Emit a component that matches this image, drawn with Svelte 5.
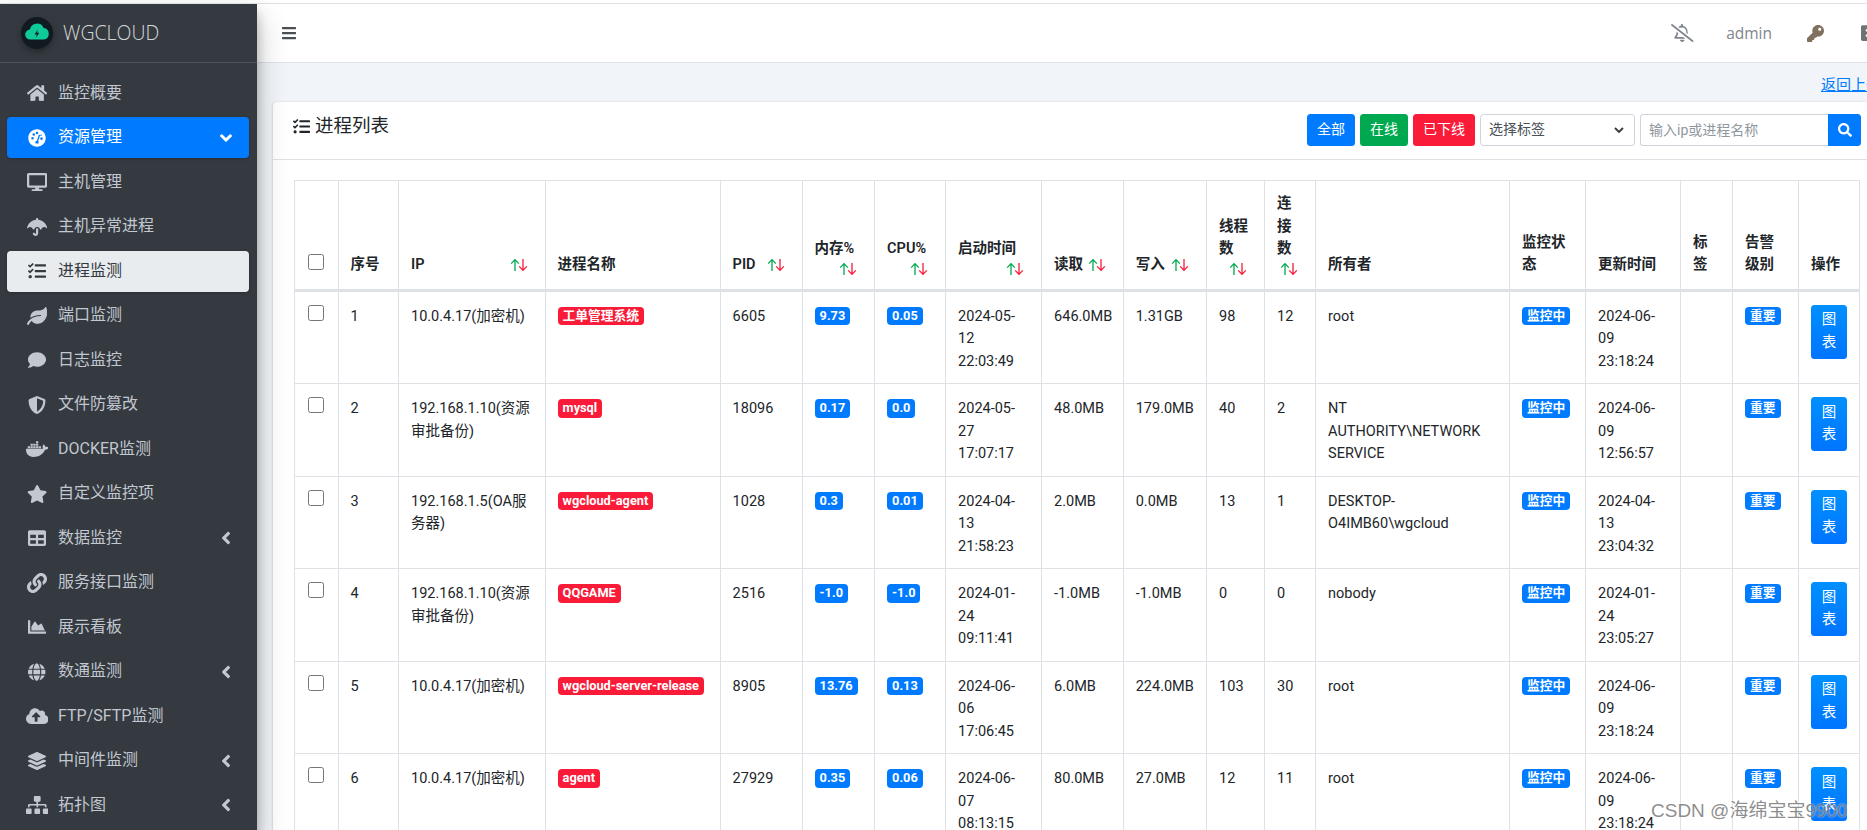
<script>
  const icons = {
    home: [576, 'M280.37 148.26L96 300.11V464a16 16 0 0 0 16 16l112.06-.29a16 16 0 0 0 15.92-16V368a16 16 0 0 1 16-16h64a16 16 0 0 1 16 16v95.64a16 16 0 0 0 16 16.05L464 480a16 16 0 0 0 16-16V300L295.67 148.26a12.19 12.19 0 0 0-15.3 0zM571.6 251.47L488 182.56V44.05a12 12 0 0 0-12-12h-56a12 12 0 0 0-12 12v72.61L318.47 43a48 48 0 0 0-61 0L4.34 251.47a12 12 0 0 0-1.6 16.9l25.5 31A12 12 0 0 0 45.15 301l235.22-193.74a12.19 12.19 0 0 1 15.3 0L530.9 301a12 12 0 0 0 16.9-1.6l25.5-31a12 12 0 0 0-1.7-16.93z'],
    star: [576, 'M259.3 17.8L194 150.2 47.9 171.5c-26.2 3.8-36.7 36.1-17.7 54.6l105.7 103-25 145.5c-4.5 26.3 23.2 46 46.4 33.7L288 439.6l130.7 68.7c23.2 12.2 50.9-7.4 46.4-33.7l-25-145.5 105.7-103c19-18.5 8.5-50.8-17.7-54.6L382 150.2 316.7 17.8c-11.7-23.6-45.6-23.9-57.4 0z'],
    comment: [512, 'M256 32C114.6 32 0 125.1 0 240c0 49.6 21.4 95 57 130.7C44.5 421.1 2.7 466 2.2 466.5c-2.2 2.3-2.8 5.7-1.5 8.7S4.8 480 8 480c66.3 0 116-31.8 140.6-51.4 32.7 12.3 69 19.4 107.4 19.4 141.4 0 256-93.1 256-208S397.4 32 256 32z'],
    tasks: [512, 'M139.61 35.5a12 12 0 0 0-17 0L58.93 98.81l-22.7-22.12a12 12 0 0 0-17 0L3.53 92.41a12 12 0 0 0 0 17l47.59 47.4a12.78 12.78 0 0 0 17.61 0l15.59-15.62L156.52 69a12.09 12.09 0 0 0 .09-17zm0 159.19a12 12 0 0 0-17 0l-63.68 63.72-22.7-22.1a12 12 0 0 0-17 0L3.53 252a12 12 0 0 0 0 17L51 316.5a12.77 12.77 0 0 0 17.6 0l15.7-15.69 72.2-72.22a12 12 0 0 0 .09-16.9zM64 368c-26.49 0-48.59 21.5-48.59 48S37.53 464 64 464a48 48 0 0 0 0-96zm432 16H208a16 16 0 0 0-16 16v32a16 16 0 0 0 16 16h288a16 16 0 0 0 16-16v-32a16 16 0 0 0-16-16zm0-320H208a16 16 0 0 0-16 16v32a16 16 0 0 0 16 16h288a16 16 0 0 0 16-16V80a16 16 0 0 0-16-16zm0 160H208a16 16 0 0 0-16 16v32a16 16 0 0 0 16 16h288a16 16 0 0 0 16-16v-32a16 16 0 0 0-16-16z'],
    bars: [448, 'M16 132h416c8.837 0 16-7.163 16-16V76c0-8.837-7.163-16-16-16H16C7.163 60 0 67.163 0 76v40c0 8.837 7.163 16 16 16zm0 160h416c8.837 0 16-7.163 16-16v-40c0-8.837-7.163-16-16-16H16c-8.837 0-16 7.163-16 16v40c0 8.837 7.163 16 16 16zm0 160h416c8.837 0 16-7.163 16-16v-40c0-8.837-7.163-16-16-16H16c-8.837 0-16 7.163-16 16v40c0 8.837 7.163 16 16 16z'],
    search: [512, 'M505 442.7L405.3 343c-4.5-4.5-10.6-7-17-7H372c27.6-35.3 44-79.7 44-128C416 93.1 322.9 0 208 0S0 93.1 0 208s93.1 208 208 208c48.3 0 92.7-16.4 128-44v16.3c0 6.4 2.5 12.5 7 17l99.7 99.7c9.4 9.4 24.6 9.4 33.9 0l28.3-28.3c9.4-9.4 9.4-24.6.1-34zM208 336c-70.7 0-128-57.2-128-128 0-70.7 57.2-128 128-128 70.7 0 128 57.2 128 128 0 70.7-57.2 128-128 128z'],
    key: [512, 'M512 176.001C512 273.203 433.202 352 336 352c-11.22 0-22.19-1.062-32.827-3.069l-24.012 27.014A23.999 23.999 0 0 1 261.223 384H224v40c0 13.255-10.745 24-24 24h-40v40c0 13.255-10.745 24-24 24H24c-13.255 0-24-10.745-24-24v-78.059c0-6.365 2.529-12.47 7.029-16.971l161.802-161.802C163.108 213.814 160 195.271 160 176 160 78.798 238.797.001 335.999 0 433.488-.001 512 78.511 512 176.001zM336 128c0 26.51 21.49 48 48 48s48-21.49 48-48-21.49-48-48-48-48 21.49-48 48z'],
    left: [256, 'M31.7 239l136-136c9.4-9.4 24.6-9.4 33.9 0l22.6 22.6c9.4 9.4 9.4 24.6 0 33.9L127.9 256l96.4 96.4c9.4 9.4 9.4 24.6 0 33.9L201.7 409c-9.4 9.4-24.6 9.4-33.9 0l-136-136c-9.5-9.4-9.5-24.6-.1-34z'],
    down: [320, 'M143 352.3L7 216.3c-9.4-9.4-9.4-24.6 0-33.9l22.6-22.6c9.4-9.4 24.6-9.4 33.9 0l96.4 96.4 96.4-96.4c9.4-9.4 24.6-9.4 33.9 0l22.6 22.6c9.4 9.4 9.4 24.6 0 33.9l-136 136c-9.2 9.4-24.4 9.4-33.8 0z'],
    desktop: [576, 'M528 0H48C21.5 0 0 21.5 0 48v320c0 26.5 21.5 48 48 48h192l-16 48h-72c-13.3 0-24 10.7-24 24s10.7 24 24 24h272c13.3 0 24-10.7 24-24s-10.7-24-24-24h-72l-16-48h192c26.5 0 48-21.5 48-48V48c0-26.5-21.5-48-48-48zm-16 352H64V64h448v288z'],
    umbrella: [576, 'M575.7 280.8C547.1 144.5 437.3 62.6 320 49.9V32c0-17.7-14.3-32-32-32s-32 14.3-32 32v17.9C138.3 62.6 29.5 144.5.3 280.8c-2.2 10.1 8.5 21.3 18.7 11.4 52-55 107.7-52.4 158.6 37 5.3 9.5 14.9 8.6 19.7 0 20.2-35.4 44.9-73.2 90.7-73.2 58.5 0 83.3 56.3 90.7 73.2 4.8 8.6 14.4 9.5 19.7 0 51-89.5 107.1-91.7 158.6-37 10.3 9.9 20.9-1.3 18.7-11.4zM256 301.7V432c0 8.8-7.2 16-16 16-7.8 0-13.2-5.3-15.1-10.7-5.9-16.7-24.1-25.4-40.8-19.5-16.7 5.9-25.4 24.2-19.5 40.8 11.2 31.9 41.6 53.3 75.4 53.3 44.1 0 80-35.9 80-80V301.6c-9.1-7.9-19.8-13.6-32-13.6-12.3 0-23 5.8-32 13.7z'],
    leaf: [576, 'M546.2 9.7c-5.6-12.5-21.6-13-28.3-1.2C486.9 62.4 431.4 96 368 96h-80C182 96 96 182 96 288c0 7 .8 13.7 1.5 20.5C161.3 262.8 253.4 224 384 224c8.8 0 16 7.2 16 16s-7.2 16-16 16C132.6 256 26 410.1 2.4 468c-6.6 16.3 1.2 34.9 17.5 41.6 16.4 6.8 35-1.1 41.8-17.3 1.5-3.6 20.9-47.9 71.9-90.6 32.4 43.9 94 85.8 174.9 77.2C465.5 467.5 576 326.7 576 154.3c0-50.2-10.8-102.2-29.8-144.6z'],
    shield: [512, 'M466.5 83.7l-192-80a48.15 48.15 0 0 0-36.9 0l-192 80C27.7 91.1 16 108.6 16 128c0 198.5 114.5 335.7 221.5 380.3 11.8 4.9 25.1 4.9 36.9 0C360.1 472.6 496 349.3 496 128c0-19.4-11.7-36.9-29.5-44.3zM256.1 446.3l-.1-381 175.9 73.3c-3.3 151.4-82.1 261.1-175.8 307.7z'],
    link: [512, 'M326.612 185.391c59.747 59.809 58.927 155.698.36 214.59-.11.12-.24.25-.36.37l-67.2 67.2c-59.27 59.27-155.699 59.262-214.96 0-59.27-59.26-59.27-155.7 0-214.96l37.106-37.106c9.84-9.84 26.786-3.3 27.294 10.606.648 17.722 3.826 35.527 9.69 52.721 1.986 5.822.567 12.262-3.783 16.612l-13.087 13.087c-28.026 28.026-28.905 73.66-1.155 101.96 28.024 28.579 74.086 28.749 102.325.51l67.2-67.19c28.191-28.191 28.073-73.757 0-101.83-3.701-3.694-7.429-6.564-10.341-8.569a16.037 16.037 0 0 1-6.947-12.606c-.396-10.567 3.348-21.456 11.698-29.806l21.054-21.055c5.521-5.521 14.182-6.199 20.584-1.731a152.482 152.482 0 0 1 20.522 17.197zM467.547 44.449c-59.261-59.262-155.69-59.27-214.96 0l-67.2 67.2c-.12.12-.25.25-.36.37-58.566 58.892-59.387 154.781.36 214.59a152.454 152.454 0 0 0 20.521 17.196c6.402 4.468 15.064 3.789 20.584-1.731l21.054-21.055c8.35-8.35 12.094-19.239 11.698-29.806a16.037 16.037 0 0 0-6.947-12.606c-2.912-2.005-6.64-4.875-10.341-8.569-28.073-28.073-28.191-73.639 0-101.83l67.2-67.19c28.239-28.239 74.3-28.069 102.325.51 27.75 28.3 26.872 73.934-1.155 101.96l-13.087 13.087c-4.35 4.35-5.769 10.79-3.783 16.612 5.864 17.194 9.042 34.999 9.69 52.721.509 13.906 17.454 20.446 27.294 10.606l37.106-37.106c59.271-59.259 59.271-155.699.001-214.959z'],
    chart: [512, 'M500 384c6.6 0 12 5.4 12 12v40c0 6.6-5.4 12-12 12H12c-6.6 0-12-5.4-12-12V76c0-6.6 5.4-12 12-12h40c6.6 0 12 5.4 12 12v308h436zM372.7 159.5L288 216l-85.3-113.7c-5.1-6.8-15.5-6.3-19.9 1L96 248v104h384l-89.9-187.8c-3.2-6.5-11.4-8.7-17.4-4.7z'],
    globe: [496, 'M336.5 160C322 70.7 287.8 8 248 8s-74 62.7-88.5 152h177zM152 256c0 22.2 1.2 43.5 3.3 64h185.3c2.1-20.5 3.3-41.8 3.3-64s-1.2-43.5-3.3-64H155.3c-2.1 20.5-3.3 41.8-3.3 64zm324.7-96c-28.6-67.9-86.5-120.4-158-141.6 24.4 33.8 41.2 84.7 50 141.6h108zM177.2 18.4C105.8 39.6 47.8 92.1 19.3 160h108c8.7-56.9 25.5-107.8 49.9-141.6zM487.4 192H372.7c2.1 21 3.3 42.5 3.3 64s-1.2 43-3.3 64h114.6c5.5-20.5 8.6-41.8 8.6-64s-3.1-43.5-8.5-64zM120 256c0-21.5 1.2-43 3.3-64H8.6C3.2 212.5 0 233.8 0 256s3.2 43.5 8.6 64h114.6c-2-21-3.2-42.5-3.2-64zm39.5 96c14.5 89.3 48.7 152 88.5 152s74-62.7 88.5-152h-177zm159.3 141.6c71.4-21.2 129.4-73.7 158-141.6h-108c-8.8 56.9-25.6 107.8-50 141.6zM19.3 352c28.6 67.9 86.5 120.4 158 141.6-24.4-33.8-41.2-84.7-50-141.6h-108z'],
    upload: [640, 'M537.6 226.6c4.1-10.7 6.4-22.4 6.4-34.6 0-53-43-96-96-96-19.7 0-38.1 6-53.3 16.2C367 64.2 315.3 32 256 32c-88.4 0-160 71.6-160 160 0 2.7.1 5.4.2 8.1C40.2 219.8 0 273.2 0 336c0 79.5 64.5 144 144 144h368c70.7 0 128-57.3 128-128 0-61.9-44-113.6-102.4-125.4zM393.4 288H328v112c0 8.8-7.2 16-16 16h-48c-8.8 0-16-7.2-16-16V288h-65.4c-14.3 0-21.4-17.2-11.3-27.3l105.4-105.4c6.2-6.2 16.4-6.2 22.6 0l105.4 105.4c10.1 10.1 2.9 27.3-11.3 27.3z'],
    layers: [512, 'M12.41 148.02l232.94 105.67c6.8 3.09 14.49 3.09 21.29 0l232.94-105.67c16.55-7.51 16.55-32.52 0-40.03L266.65 2.31a25.607 25.607 0 0 0-21.29 0L12.41 107.98c-16.55 7.51-16.55 32.53 0 40.04zm487.18 88.28l-58.09-26.33-161.64 73.27c-7.56 3.43-15.59 5.17-23.86 5.17s-16.29-1.74-23.86-5.17L70.51 209.97l-58.1 26.33c-16.55 7.5-16.55 32.5 0 40l232.94 105.59c6.8 3.08 14.49 3.08 21.29 0L499.59 276.3c16.55-7.5 16.55-32.5 0-40zm0 127.8l-57.87-26.23-161.86 73.37c-7.56 3.43-15.59 5.17-23.86 5.17s-16.29-1.74-23.86-5.17L70.29 337.87 12.41 364.1c-16.55 7.5-16.55 32.5 0 40l232.94 105.59c6.8 3.08 14.49 3.08 21.29 0L499.59 404.1c16.55-7.5 16.55-32.5 0-40z'],
    sitemap: [640, 'M128 352H32c-17.67 0-32 14.33-32 32v96c0 17.67 14.33 32 32 32h96c17.67 0 32-14.33 32-32v-96c0-17.67-14.33-32-32-32zm-24-80h192v48h48v-48h192v48h48v-57.59c0-21.17-17.23-38.41-38.41-38.41H344v-64h40c17.67 0 32-14.33 32-32V32c0-17.67-14.33-32-32-32H256c-17.67 0-32 14.33-32 32v96c0 17.67 14.33 32 32 32h40v64H94.41C73.23 224 56 241.23 56 262.41V320h48v-48zm264 80h-96c-17.67 0-32 14.33-32 32v96c0 17.67 14.33 32 32 32h96c17.67 0 32-14.33 32-32v-96c0-17.67-14.33-32-32-32zm240 0h-96c-17.67 0-32 14.33-32 32v96c0 17.67 14.33 32 32 32h96c17.67 0 32-14.33 32-32v-96c0-17.67-14.33-32-32-32z'],
    table: [512, 'M464 32H48C21.49 32 0 53.49 0 80v352c0 26.51 21.49 48 48 48h416c26.51 0 48-21.49 48-48V80c0-26.51-21.49-48-48-48zM224 416H64v-96h160v96zm0-160H64v-96h160v96zm224 160H288v-96h160v96zm0-160H288v-96h160v96z'],
    gauge: [512, 'M256 8C119 8 8 119 8 256s111 248 248 248 248-111 248-248S393 8 256 8zm0 72a36 36 0 1 1 0 72 36 36 0 0 1 0-72zM128 300a36 36 0 1 1 0-72 36 36 0 0 1 0 72zm36-110a36 36 0 1 1 0-72 36 36 0 0 1 0 72zm140 190c0 12-3 22-8 32H216c-5-10-8-20-8-32 0-26 20-47 46-48l52-158c3-10 14-15 24-12s15 14 12 24l-52 158c12 9 14 22 14 36zm60-180c-6 0-11-2-15-5l14-43c0 0 1 0 1 0a24 24 0 1 1 0 48zm20 110a36 36 0 1 1 0-72 36 36 0 0 1 0 72z'],
    bellSlash: [640, 'M633.99 471.02L36 3.51C29.1-2.01 19.03-.9 13.51 6l-10 12.49C-2.02 25.39-.9 35.46 6 40.98l598 467.51c6.9 5.52 16.96 4.4 22.49-2.49l10-12.49c5.52-6.9 4.41-16.97-2.5-22.49zM163.53 368c16.71-22.03 34.48-55.8 41.4-110.58l-45.47-35.55c-3.27 90.73-36.47 120.68-54.84 140.42-6 6.45-8.66 14.16-8.61 21.71.11 16.4 12.98 32 32.1 32h279.66l-61.4-48H163.53zM320 96c61.86 0 112 50.14 112 112 0 .2-.06.38-.06.58-.02 16.84 1.71 31.77 3.92 45.9l59.44 46.47c-11.56-16.6-25.43-36.8-25.43-92.96 0-77.71-54.48-139.91-127.94-155.16V32c0-17.67-14.32-32-31.98-32s-31.98 14.33-31.98 32v20.84c-25.8 5.36-49.14 16.67-69.03 31.76l38.91 30.43C262.24 103.61 289.9 96 320 96zm0 416c35.32 0 63.97-28.65 63.97-64H256.03c0 35.35 28.65 64 63.97 64z'],
    windowClose: [512, 'M464 32H48C21.5 32 0 53.5 0 80v352c0 26.5 21.5 48 48 48h416c26.5 0 48-21.5 48-48V80c0-26.5-21.5-48-48-48zm-83.6 290.5c4.8 4.8 4.8 12.6 0 17.4l-40.5 40.5c-4.8 4.8-12.6 4.8-17.4 0L256 313.3l-66.5 67.1c-4.8 4.8-12.6 4.8-17.4 0l-40.5-40.5c-4.8-4.8-4.8-12.6 0-17.4l67.1-66.5-67.1-66.5c-4.8-4.8-4.8-12.6 0-17.4l40.5-40.5c4.8-4.8 12.6-4.8 17.4 0l66.5 67.1 66.5-67.1c4.8-4.8 12.6-4.8 17.4 0l40.5 40.5c4.8 4.8 4.8 12.6 0 17.4L313.3 256l67.1 66.5z'],
    docker: [640, 'M349.9 236.3h-66.1v-59.4h66.1v59.4zm0-204.3h-66.1v60.7h66.1V32zm78.2 144.8H362v59.4h66.1v-59.4zm-156.3-72.1h-66.1v60.1h66.1v-60.1zm78.1 0h-66.1v60.1h66.1v-60.1zm276.8 100c-14.4-9.7-47.6-13.2-73.1-8.4-3.3-24-16.7-44.9-41.1-63.7l-14-9.3-9.3 14c-18.4 27.8-23.4 73.6-3.7 103.8-8.7 4.7-25.8 11.1-48.4 10.7H2.4c-8.7 50.8 5.8 116.8 44 162.1 37.1 43.9 92.7 66.2 165.4 66.2 157.4 0 273.9-72.5 328.4-204.2 21.4.4 67.6.1 91.3-45.2 1.5-2.5 6.6-13.2 8.5-17.1l-13.3-8.9zm-511.1-27.9h-66v59.4h66.1v-59.4zm78.1 0h-66.1v59.4h66.1v-59.4zm78.1 0h-66.1v59.4h66.1v-59.4zm-78.1-72.1h-66.1v60.1h66.1v-60.1z']
  };

  const menu = [
    { icon: 'home', label: '监控概要' },
    { icon: 'gauge', label: '资源管理', state: 'open', arrow: 'down' },
    { icon: 'desktop', label: '主机管理' },
    { icon: 'umbrella', label: '主机异常进程' },
    { icon: 'tasks', label: '进程监测', state: 'current' },
    { icon: 'leaf', label: '端口监测' },
    { icon: 'comment', label: '日志监控' },
    { icon: 'shield', label: '文件防篡改' },
    { icon: 'docker', label: 'DOCKER监测' },
    { icon: 'star', label: '自定义监控项' },
    { icon: 'table', label: '数据监控', arrow: 'left' },
    { icon: 'link', label: '服务接口监测' },
    { icon: 'chart', label: '展示看板' },
    { icon: 'globe', label: '数通监测', arrow: 'left' },
    { icon: 'upload', label: 'FTP/SFTP监测' },
    { icon: 'layers', label: '中间件监测', arrow: 'left' },
    { icon: 'sitemap', label: '拓扑图', arrow: 'left' }
  ];

  const columns = [
    { width: 44, check: true },
    { width: 60.5, label: '序号' },
    { width: 146.6, label: 'IP', sort: true },
    { width: 175, label: '进程名称' },
    { width: 82, label: 'PID', sort: true },
    { width: 72.5, label: '内存%', sort: true },
    { width: 71, label: 'CPU%', sort: true },
    { width: 96, label: '启动时间', sort: true },
    { width: 81.6, label: '读取', sort: true },
    { width: 83.4, label: '写入', sort: true },
    { width: 58, label: '线程数', sort: true },
    { width: 51, label: '连接数', sort: true },
    { width: 194, label: '所有者' },
    { width: 76, label: '监控状态' },
    { width: 95, label: '更新时间' },
    { width: 52, label: '标签' },
    { width: 66, label: '告警级别' },
    { width: 61.4, label: '操作' }
  ];

  const rows = [
    { ip: '10.0.4.17(加密机)', name: '工单管理系统', pid: 6605, mem: '9.73', cpu: '0.05', start: '2024-05-12 22:03:49', read: '646.0MB', write: '1.31GB', threads: 98, conns: 12, owner: 'root', updated: '2024-06-09 23:18:24' },
    { ip: '192.168.1.10(资源审批备份)', name: 'mysql', pid: 18096, mem: '0.17', cpu: '0.0', start: '2024-05-27 17:07:17', read: '48.0MB', write: '179.0MB', threads: 40, conns: 2, owner: 'NT AUTHORITY\\NETWORK SERVICE', updated: '2024-06-09 12:56:57' },
    { ip: '192.168.1.5(OA服务器)', name: 'wgcloud-agent', pid: 1028, mem: '0.3', cpu: '0.01', start: '2024-04-13 21:58:23', read: '2.0MB', write: '0.0MB', threads: 13, conns: 1, owner: 'DESKTOP-O4IMB60\\wgcloud', updated: '2024-04-13 23:04:32' },
    { ip: '192.168.1.10(资源审批备份)', name: 'QQGAME', pid: 2516, mem: '-1.0', cpu: '-1.0', start: '2024-01-24 09:11:41', read: '-1.0MB', write: '-1.0MB', threads: 0, conns: 0, owner: 'nobody', updated: '2024-01-24 23:05:27' },
    { ip: '10.0.4.17(加密机)', name: 'wgcloud-server-release', pid: 8905, mem: '13.76', cpu: '0.13', start: '2024-06-06 17:06:45', read: '6.0MB', write: '224.0MB', threads: 103, conns: 30, owner: 'root', updated: '2024-06-09 23:18:24' },
    { ip: '10.0.4.17(加密机)', name: 'agent', pid: 27929, mem: '0.35', cpu: '0.06', start: '2024-06-07 08:13:15', read: '80.0MB', write: '27.0MB', threads: 12, conns: 11, owner: 'root', updated: '2024-06-09 23:18:24' }
  ];
</script>

{#snippet icon(name, cls = '')}
  <svg class="icon {cls}" viewBox="0 0 {icons[name][0]} 512" aria-hidden="true"><path d={icons[name][1]} /></svg>
{/snippet}

{#snippet sortArrows()}
  <svg class="sort" viewBox="0 0 18 14" aria-hidden="true">
    <path class="up" d="M5 13V2M1.2 5.6 5 1.6l3.8 4" />
    <path class="down" d="M13 1v11M9.2 8.4l3.8 4 3.8-4" />
  </svg>
{/snippet}

<div class="shell">
  <aside class="sidebar">
    <div class="brand">
      <span class="logo">
        <svg viewBox="0 0 32 32" aria-hidden="true">
          <path class="cloud" d="M9.5 22.5a5 5 0 0 1-.6-10A7.2 7.2 0 0 1 22.6 11a5.8 5.8 0 0 1 .2 11.5z" />
          <path class="bolt" d="M16.8 12.4 13.6 17.4h2.3l-1 3.6 3.4-5.2H16z" />
        </svg>
      </span>
      <span class="brand-name">WGCLOUD</span>
    </div>
    <nav class="menu">
      {#each menu as item}
        <a href="#top" class="menu-item {item.state ?? ''}">
          <span class="menu-icon {item.icon}">{@render icon(item.icon)}</span>
          <span class="menu-label">{item.label}</span>
          {#if item.arrow}
            <span class="menu-arrow">{@render icon(item.arrow)}</span>
          {/if}
        </a>
      {/each}
    </nav>
  </aside>

  <main class="main">
    <header class="topbar">
      <span class="bars">{@render icon('bars')}</span>
      <div class="top-right">
        <span class="bell">{@render icon('bellSlash')}</span>
        <span class="user">admin</span>
        <span class="key">{@render icon('key')}</span>
        <span class="close">{@render icon('windowClose')}</span>
      </div>
    </header>

    <div class="content">
      <div class="back-row"><a href="#top">返回上一页</a></div>

      <section class="card">
        <div class="card-header">
          <h3 class="card-title">{@render icon('tasks')}<span>进程列表</span></h3>
          <div class="tools">
            <button class="btn blue">全部</button>
            <button class="btn green">在线</button>
            <button class="btn red">已下线</button>
            <select class="tag-select"><option>选择标签</option></select>
            <div class="search">
              <input type="text" placeholder="输入ip或进程名称" />
              <button class="search-btn" aria-label="搜索">{@render icon('search')}</button>
            </div>
          </div>
        </div>

        <div class="card-body">
          <table>
            <colgroup>
              {#each columns as col}
                <col style="width: {col.width}px" />
              {/each}
            </colgroup>
            <thead>
              <tr>
                {#each columns as col}
                  <th>
                    {#if col.check}
                      <input type="checkbox" />
                    {:else}
                      <div class="th-inner">
                        <span>{col.label}</span>
                        {#if col.sort}{@render sortArrows()}{/if}
                      </div>
                    {/if}
                  </th>
                {/each}
              </tr>
            </thead>
            <tbody>
              {#each rows as row, i}
                <tr>
                  <td class="check"><input type="checkbox" /></td>
                  <td>{i + 1}</td>
                  <td>{row.ip}</td>
                  <td><span class="badge danger">{row.name}</span></td>
                  <td>{row.pid}</td>
                  <td><span class="badge primary">{row.mem}</span></td>
                  <td><span class="badge primary">{row.cpu}</span></td>
                  <td>{row.start}</td>
                  <td>{row.read}</td>
                  <td>{row.write}</td>
                  <td>{row.threads}</td>
                  <td>{row.conns}</td>
                  <td>{row.owner}</td>
                  <td><span class="badge primary">监控中</span></td>
                  <td>{row.updated}</td>
                  <td></td>
                  <td><span class="badge primary">重要</span></td>
                  <td class="action"><button class="chart-btn">图表</button></td>
                </tr>
              {/each}
            </tbody>
          </table>
        </div>
      </section>
    </div>
  </main>

  <div class="watermark">CSDN @海绵宝宝9900</div>
</div>

<style>
  :global(body) {
    margin: 0;
    overflow: hidden;
    background: #fff;
  }

  .shell {
    position: relative;
    display: flex;
    width: 1896px;
    height: 830px;
    overflow: hidden;
    padding-top: 3px;
    box-sizing: border-box;
    font-family: Roboto, "Noto Sans CJK SC", sans-serif;
    font-size: 14.5px;
    line-height: 22.5px;
    color: #212529;
  }

  .icon {
    display: block;
    height: 1em;
    width: auto;
    fill: currentColor;
  }

  .sidebar {
    position: relative;
    z-index: 2;
    flex: 0 0 257px;
    border-top: 1px solid #dee2e6;
    background: #343a40;
    color: #c2c7d0;
    box-shadow: 0 14px 28px rgba(0, 0, 0, 0.25), 0 10px 10px rgba(0, 0, 0, 0.22);
  }

  .brand {
    display: flex;
    align-items: center;
    gap: 10px;
    height: 59px;
    padding-left: 21px;
    box-sizing: border-box;
    border-bottom: 1px solid #4b545c;
  }

  .logo {
    width: 32px;
    height: 32px;
    border-radius: 50%;
    background: #111a21;
    box-shadow: 0 3px 6px rgba(0, 0, 0, 0.3);
  }

  .logo svg {
    display: block;
  }

  .logo .cloud {
    fill: #10c998;
  }

  .logo .bolt {
    fill: #111a21;
  }

  .brand-name {
    font-family: "Open Sans", sans-serif;
    font-size: 19.5px;
    font-weight: 300;
    color: rgba(255, 255, 255, 0.8);
  }

  .menu {
    display: flex;
    flex-direction: column;
    gap: 3.5px;
    padding: 9.5px 8px 0 7px;
  }

  .menu-item {
    display: flex;
    align-items: center;
    height: 41px;
    flex: none;
    border-radius: 4px;
    color: #c2c7d0;
    text-decoration: none;
    font-size: 16px;
  }

  .menu-item.open {
    background: #007bff;
    color: #fff;
    box-shadow: 0 1px 3px rgba(0, 0, 0, 0.2);
  }

  .menu-item.current {
    background: #e9ecef;
    color: #343a40;
    box-shadow: 0 1px 3px rgba(0, 0, 0, 0.2);
  }

  .menu-icon {
    display: flex;
    justify-content: center;
    flex: 0 0 24px;
    margin: 0 9px 0 18px;
    font-size: 18px;
  }

  .menu-icon.link {
    font-size: 20px;
  }

  .menu-label {
    flex: 1;
    white-space: nowrap;
  }

  .menu-arrow {
    width: 12px;
    display: flex;
    justify-content: center;
    margin-right: 17px;
    font-size: 20px;
  }

  .main {
    flex: 1;
    min-width: 0;
    display: flex;
    flex-direction: column;
    border-top: 1px solid #dee2e6;
    background: #f1f4f8;
  }

  .topbar {
    display: flex;
    align-items: center;
    justify-content: space-between;
    height: 59px;
    padding-left: 25px;
    box-sizing: border-box;
    background: #fff;
    border-bottom: 1px solid #dee2e6;
    flex: none;
  }

  .bars {
    font-size: 16px;
    color: #494f55;
  }

  .top-right {
    display: flex;
    align-items: center;
    color: #80868c;
  }

  .bell {
    width: 22px;
    font-size: 18px;
    margin-right: 33px;
  }

  .user {
    font-family: "Open Sans", sans-serif;
    font-size: 15.5px;
    color: #80868c;
    margin-right: 35px;
  }

  .key {
    font-size: 17px;
    color: #80705e;
    margin-right: 37px;
  }

  .close {
    font-size: 18px;
    margin-right: 17px;
    color: #6e7378;
  }

  .content {
    flex: 1;
    padding: 0 0 0 16px;
  }

  .back-row {
    height: 38.5px;
    display: flex;
    align-items: flex-end;
    justify-content: flex-end;
    padding-bottom: 5px;
    box-sizing: border-box;
  }

  .back-row a {
    color: #007bff;
    text-decoration: underline;
    font-size: 15px;
  }

  .card {
    margin-top: 0;
    background: #fff;
    border-radius: 4px 0 0 0;
    box-shadow: 0 0 1px rgba(0, 0, 0, 0.125), 0 1px 3px rgba(0, 0, 0, 0.2);
  }

  .card-header {
    display: flex;
    align-items: center;
    justify-content: space-between;
    height: 58px;
    padding: 0 35px 0 20px;
    box-sizing: border-box;
    border-bottom: 1px solid #dee2e6;
  }

  .card-title {
    display: flex;
    align-items: center;
    gap: 5px;
    margin: 0 0 8px;
    font-size: 18.5px;
    font-weight: 400;
    line-height: 1.2;
  }

  .card-title .icon {
    font-size: 17px;
  }

  .tools {
    display: flex;
    align-items: center;
    gap: 5px;
    margin-top: -1px;
  }

  .btn {
    height: 32px;
    padding: 0 10px;
    border: 0;
    border-radius: 3.5px;
    color: #fff;
    font: inherit;
    font-size: 14px;
  }

  .btn.blue {
    background: #007bff;
  }

  .btn.green {
    background: #00a94f;
  }

  .btn.red {
    background: #f91b38;
  }

  .tag-select {
    width: 155px;
    height: 32px;
    padding: 0 8px;
    border: 1px solid #ced4da;
    border-radius: 3.5px;
    appearance: none;
    background: #fff url("data:image/svg+xml,%3Csvg xmlns='http://www.w3.org/2000/svg' viewBox='0 0 10 6'%3E%3Cpath d='M1 1l4 4 4-4' fill='none' stroke='%23343a40' stroke-width='1.8'/%3E%3C/svg%3E") no-repeat right 10px center / 10px 6px;
    color: #495057;
    font: inherit;
    font-size: 14px;
  }

  .search {
    display: flex;
    width: 221px;
  }

  .search input {
    flex: 1;
    min-width: 0;
    height: 32px;
    padding: 0 8px;
    box-sizing: border-box;
    border: 1px solid #ced4da;
    border-right: 0;
    border-radius: 3.5px 0 0 3.5px;
    font: inherit;
    font-size: 14px;
    color: #495057;
  }

  .search input::placeholder {
    color: #8f979e;
  }

  .search-btn {
    display: flex;
    align-items: center;
    justify-content: center;
    width: 33px;
    height: 32px;
    border: 0;
    border-radius: 0 3.5px 3.5px 0;
    background: #007bff;
    color: #fff;
    font-size: 14px;
    padding: 0;
  }

  .card-body {
    padding: 20.5px 20px 0 20.5px;
  }

  table {
    table-layout: fixed;
    width: 1566px;
    border-collapse: collapse;
  }

  th,
  td {
    padding: 14px 12px 10px;
    border: 1px solid #dee2e6;
    vertical-align: top;
    text-align: left;
  }

  th {
    padding: 12px;
    vertical-align: bottom;
    font-weight: 600;
    border-bottom-width: 3px;
  }

  input[type='checkbox'] {
    display: block;
    width: 16px;
    height: 16px;
    margin: -1px 0 0 1px;
  }

  th input[type='checkbox'] {
    margin: 0 0 7px 1px;
  }

  .th-inner {
    display: flex;
    flex-wrap: wrap;
    align-items: center;
  }

  .sort {
    margin-left: auto;
    margin-right: 5px;
    width: 18px;
    height: 16px;
    fill: none;
    stroke-width: 1.3;
  }

  .sort .up {
    stroke: #00a94f;
  }

  .sort .down {
    stroke: #f91b38;
  }

  .badge {
    display: inline-block;
    padding: 0 5px;
    border-radius: 4px;
    color: #fff;
    font-size: 12.75px;
    font-weight: 700;
    line-height: 18.5px;
    white-space: nowrap;
    vertical-align: 1px;
  }

  .badge.danger {
    background: #f91b38;
  }

  .badge.primary {
    background: #007bff;
  }

  .action {
    padding-top: 12px;
  }

  .chart-btn {
    display: block;
    width: 36px;
    height: 54px;
    margin-top: 1px;
    padding: 3px 7px;
    border: 0;
    border-radius: 3.5px;
    background: linear-gradient(180deg, #0090ff, #0074ff);
    color: #fff;
    font: inherit;
    font-size: 14.5px;
  }

  .watermark {
    position: absolute;
    left: 1651px;
    top: 799px;
    font-family: "Liberation Sans", "Noto Sans CJK SC", sans-serif;
    font-size: 19px;
    line-height: 24px;
    color: rgba(90, 90, 90, 0.7);
    text-shadow: 0 0 2px rgba(255, 255, 255, 0.9);
    white-space: nowrap;
  }
</style>
